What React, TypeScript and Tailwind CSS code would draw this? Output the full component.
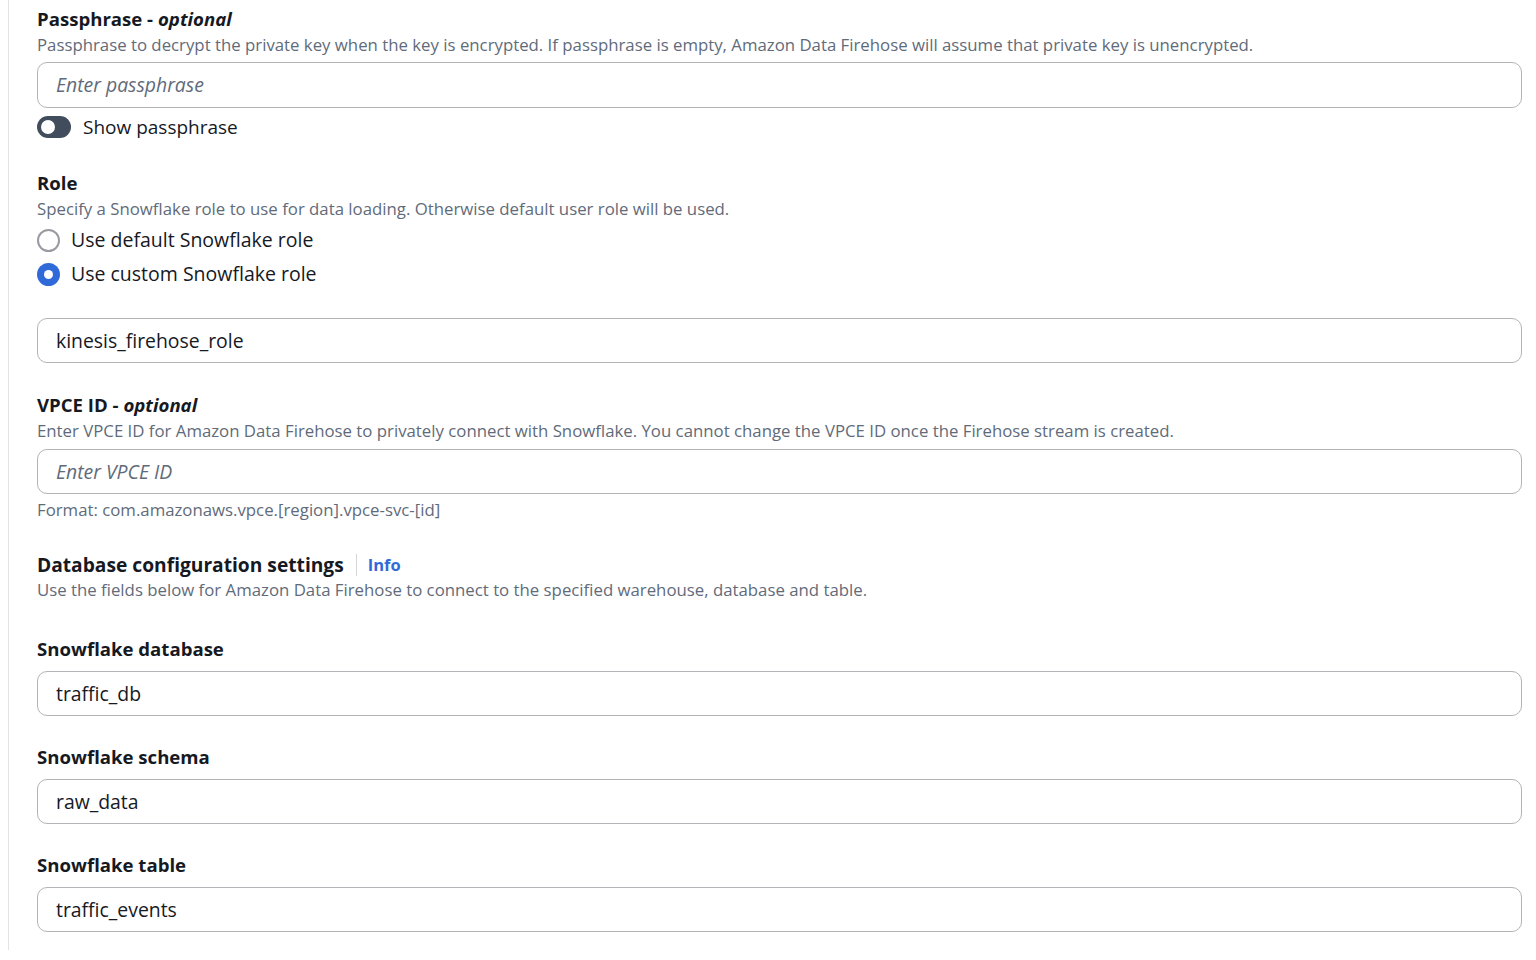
import React from "react";

const font = { fontFamily: '"Open Sans", "Noto Sans", Arial, sans-serif' };

function Label({ children, className = "" }: { children: React.ReactNode; className?: string }) {
  return (
    <div className={`h-[22px] leading-[22px] text-[18.6px] font-bold text-[#16191f] ${className}`}>{children}</div>
  );
}

function Desc({ children, className = "" }: { children: React.ReactNode; className?: string }) {
  return (
    <div className={`h-[20px] leading-[20px] text-[16.8px] text-[#5f6b7a] whitespace-nowrap ${className}`}>{children}</div>
  );
}

function Input({ value, placeholder, className = "" }: { value?: string; placeholder?: string; className?: string }) {
  return (
    <div
      className={`h-[45px] w-full rounded-[10px] border border-[#b4b4b8] bg-white pl-[18px] flex items-center text-[19.4px] ${className}`}
    >
      {value ? (
        <span className="text-[#16191f]">{value}</span>
      ) : (
        <span className="italic text-[#5f6b7a]">{placeholder}</span>
      )}
    </div>
  );
}

function Radio({ checked, label, className = "" }: { checked?: boolean; label: string; className?: string }) {
  return (
    <div className={`h-[28px] flex items-center gap-[11px] ${className}`}>
      {checked ? (
        <span className="w-[23px] h-[23px] rounded-full bg-[#2f6ad8] flex items-center justify-center">
          <span className="w-[9px] h-[9px] rounded-full bg-white" />
        </span>
      ) : (
        <span className="w-[23px] h-[23px] rounded-full border-2 border-[#9a9aa0] bg-white" />
      )}
      <span className="text-[19.5px] text-[#16191f]">{label}</span>
    </div>
  );
}

export default function App() {
  return (
    <div className="w-[1536px] h-[960px] bg-white overflow-hidden" style={font}>
      <div className="ml-[8px] h-[950px] border-l border-[#e3e3e6] pl-[28px] pr-[14px] pt-[8px]">
        <Label>
          Passphrase - <span className="italic">optional</span>
        </Label>
        <Desc className="mt-[5px]">
          Passphrase to decrypt the private key when the key is encrypted. If passphrase is empty, Amazon Data Firehose will assume that private key is unencrypted.
        </Desc>
        <Input placeholder="Enter passphrase" className="mt-[7px] h-[46px]" />
        <div className="mt-[8px] h-[22px] flex items-center gap-[12px]">
          <span className="w-[34px] h-[22px] rounded-full bg-[#414d5c] flex items-center pl-[4px]">
            <span className="w-[14px] h-[14px] rounded-full bg-white" />
          </span>
          <span className="text-[19px] text-[#16191f]">Show passphrase</span>
        </div>

        <Label className="mt-[34px]">Role</Label>
        <Desc className="mt-[5px]">
          Specify a Snowflake role to use for data loading. Otherwise default user role will be used.
        </Desc>
        <Radio label="Use default Snowflake role" className="mt-[7px]" />
        <Radio checked label="Use custom Snowflake role" className="mt-[6px]" />
        <Input value="kinesis_firehose_role" className="mt-[30px]" />

        <Label className="mt-[31px]">
          VPCE ID - <span className="italic">optional</span>
        </Label>
        <Desc className="mt-[5px]">
          Enter VPCE ID for Amazon Data Firehose to privately connect with Snowflake. You cannot change the VPCE ID once the Firehose stream is created.
        </Desc>
        <Input placeholder="Enter VPCE ID" className="mt-[8px]" />
        <Desc className="mt-[6px]">Format: com.amazonaws.vpce.[region].vpce-svc-[id]</Desc>

        <div className="mt-[34px] h-[22px] flex items-center">
          <span className="text-[19.2px] font-bold text-[#16191f] leading-[22px]">Database configuration settings</span>
          <span className="ml-[12px] mr-[11px] w-px h-[22px] bg-[#d5d5d8]" />
          <span className="text-[16.5px] font-bold text-[#2f6ad8]">Info</span>
        </div>
        <Desc className="mt-[4px]">
          Use the fields below for Amazon Data Firehose to connect to the specified warehouse, database and table.
        </Desc>

        <Label className="mt-[38px]">Snowflake database</Label>
        <Input value="traffic_db" className="mt-[11px]" />

        <Label className="mt-[30px]">Snowflake schema</Label>
        <Input value="raw_data" className="mt-[11px]" />

        <Label className="mt-[30px]">Snowflake table</Label>
        <Input value="traffic_events" className="mt-[11px]" />
      </div>
    </div>
  );
}
